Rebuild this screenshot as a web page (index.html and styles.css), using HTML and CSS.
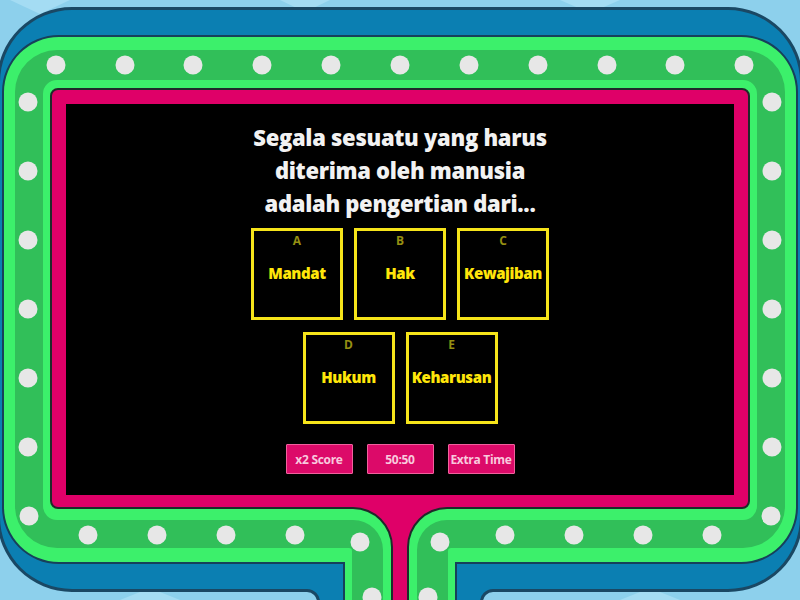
FILE: index.html
```html
<!DOCTYPE html>
<html lang="id">
<head>
<meta charset="utf-8">
<title>Gameshow Quiz</title>
<link rel="stylesheet" href="styles.css">
</head>
<body>
<div class="stage">
  <svg class="frame" width="800" height="600" viewBox="0 0 800 600" aria-hidden="true">
    <polygon class="sky-tri" points="10,0 40,14 70,0"/>
    <polygon class="sky-tri" points="280,0 305,12 330,0"/>
    <polygon class="sky-tri" points="560,0 590,13 620,0"/>
    <polygon class="sky-tri" points="120,600 150,588 180,600"/>
    <polygon class="sky-tri" points="620,600 650,588 680,600"/>
    <path class="blue-edge" d="M72 7 H728 A75 75 0 0 1 803 82 V517 A75 75 0 0 1 728 592 H493 A10 10 0 0 0 483 602 V620 H317 V602 A10 10 0 0 0 307 592 H72 A75 75 0 0 1 -3 517 V82 A75 75 0 0 1 72 7 Z"/>
    <path class="blue" d="M72 10 H728 A72 72 0 0 1 800 82 V517 A72 72 0 0 1 728 589 H493 A13 13 0 0 0 480 602 V620 H320 V602 A13 13 0 0 0 307 589 H72 A72 72 0 0 1 0 517 V82 A72 72 0 0 1 72 10 Z"/>
    <path class="green-edge" d="M59 35 H741 A57 57 0 0 1 798 92 V507 A57 57 0 0 1 741 564 H457 V620 H343 V564 H59 A57 57 0 0 1 2 507 V92 A57 57 0 0 1 59 35 Z"/>
    <path class="green-light" d="M59 37 H741 A55 55 0 0 1 796 92 V507 A55 55 0 0 1 741 562 H455 V620 H345 V562 H59 A55 55 0 0 1 4 507 V92 A55 55 0 0 1 59 37 Z"/>
    <path class="green-dark" d="M57 50 H743 A42 42 0 0 1 785 92 V506 A42 42 0 0 1 743 548 H451 A3 3 0 0 0 448 551 V620 H352 V551 A3 3 0 0 0 349 548 H57 A42 42 0 0 1 15 506 V92 A42 42 0 0 1 57 50 Z"/>
    <path class="green-light" d="M57 80 H743 A14 14 0 0 1 757 94 V506 A14 14 0 0 1 743 520 H447 A30 30 0 0 0 417 550 V620 H383 V550 A30 30 0 0 0 353 520 H57 A14 14 0 0 1 43 506 V94 A14 14 0 0 1 57 80 Z"/>
    <path class="pink-edge" d="M58 88 H742 A8 8 0 0 1 750 96 V501 A8 8 0 0 1 742 509 H447 A38 38 0 0 0 409 547 V620 H391 V547 A38 38 0 0 0 353 509 H58 A8 8 0 0 1 50 501 V96 A8 8 0 0 1 58 88 Z"/>
    <path class="pink" d="M58 90 H742 A6 6 0 0 1 748 96 V501 A6 6 0 0 1 742 507 H447 A40 40 0 0 0 407 547 V620 H393 V547 A40 40 0 0 0 353 507 H58 A6 6 0 0 1 52 501 V96 A6 6 0 0 1 58 90 Z"/>
    <g class="bulbs">
      <circle cx="56" cy="65" r="9.5"/><circle cx="125" cy="65" r="9.5"/><circle cx="193" cy="65" r="9.5"/>
      <circle cx="262" cy="65" r="9.5"/><circle cx="331" cy="65" r="9.5"/><circle cx="400" cy="65" r="9.5"/>
      <circle cx="469" cy="65" r="9.5"/><circle cx="538" cy="65" r="9.5"/><circle cx="607" cy="65" r="9.5"/>
      <circle cx="675" cy="65" r="9.5"/><circle cx="744" cy="65" r="9.5"/>
      <circle cx="28" cy="102" r="9.5"/><circle cx="28" cy="171" r="9.5"/><circle cx="28" cy="240" r="9.5"/>
      <circle cx="28" cy="309" r="9.5"/><circle cx="28" cy="378" r="9.5"/><circle cx="28" cy="447" r="9.5"/>
      <circle cx="29" cy="516" r="9.5"/>
      <circle cx="772" cy="102" r="9.5"/><circle cx="772" cy="171" r="9.5"/><circle cx="772" cy="240" r="9.5"/>
      <circle cx="772" cy="309" r="9.5"/><circle cx="772" cy="378" r="9.5"/><circle cx="772" cy="447" r="9.5"/>
      <circle cx="771" cy="516" r="9.5"/>
      <circle cx="88" cy="535" r="9.5"/><circle cx="157" cy="535" r="9.5"/><circle cx="226" cy="535" r="9.5"/>
      <circle cx="295" cy="535" r="9.5"/><circle cx="360" cy="542" r="9.5"/><circle cx="372" cy="597" r="9.5"/>
      <circle cx="712" cy="535" r="9.5"/><circle cx="643" cy="535" r="9.5"/><circle cx="574" cy="535" r="9.5"/>
      <circle cx="505" cy="535" r="9.5"/><circle cx="440" cy="542" r="9.5"/><circle cx="428" cy="597" r="9.5"/>
    </g>
  </svg>

  <main class="screen">
    <h1 class="question">Segala sesuatu yang harus<br>diterima oleh manusia<br>adalah pengertian dari...</h1>
    <div class="answers">
      <div class="answer-row">
        <div class="card"><span class="key">A</span><span class="choice">Mandat</span></div>
        <div class="card"><span class="key">B</span><span class="choice">Hak</span></div>
        <div class="card"><span class="key">C</span><span class="choice">Kewajiban</span></div>
      </div>
      <div class="answer-row">
        <div class="card"><span class="key">D</span><span class="choice">Hukum</span></div>
        <div class="card"><span class="key">E</span><span class="choice">Keharusan</span></div>
      </div>
    </div>
    <div class="powerups">
      <button class="powerup">x2 Score</button>
      <button class="powerup">50:50</button>
      <button class="powerup">Extra Time</button>
    </div>
  </main>
</div>
</body>
</html>
```

FILE: styles.css
```css
html, body {
  margin: 0;
  padding: 0;
}

body {
  background: #8dd0ec;
  font-family: "Open Sans", Roboto, "Liberation Sans", sans-serif;
}

.stage {
  position: relative;
  width: 800px;
  height: 600px;
  overflow: hidden;
  background: #8dd0ec;
}

.frame {
  position: absolute;
  left: 0;
  top: 0;
  display: block;
}

.sky-tri { fill: #a4dcf3; }
.blue-edge { fill: #1a4864; }
.blue { fill: #0b7fb2; }
.green-edge { fill: #17405a; }
.green-light { fill: #3cf06b; }
.green-dark { fill: #31bf59; }
.pink-edge { fill: #1f2a2a; }
.pink { fill: #df0068; }
.bulbs circle { fill: #e7e7e7; }

.screen {
  position: relative;
  box-sizing: border-box;
  width: 668px;
  height: 391px;
  margin: 104px 0 0 66px;
  padding-top: 17px;
  background: #000;
  display: flex;
  flex-direction: column;
  align-items: center;
}

.question {
  margin: 0;
  color: #f2f2f2;
  font-family: "Open Sans", Roboto, sans-serif;
  font-size: 22px;
  line-height: 33px;
  font-weight: 800;
  letter-spacing: -0.3px;
  text-align: center;
}

.answers {
  margin-top: 8px;
  display: flex;
  flex-direction: column;
  gap: 12px;
}

.answer-row {
  display: flex;
  justify-content: center;
  gap: 11px;
}

.card {
  box-sizing: border-box;
  width: 92px;
  height: 92px;
  border: 3px solid #f6e41a;
  display: grid;
  justify-items: center;
}

.key {
  grid-area: 1 / 1;
  align-self: start;
  margin-top: 3px;
  line-height: 14px;
  font-size: 12px;
  font-weight: 700;
  color: #958f12;
}

.choice {
  grid-area: 1 / 1;
  align-self: center;
  margin-bottom: 2px;
  font-size: 15px;
  font-weight: 800;
  color: #ffe60a;
  letter-spacing: -0.4px;
}

.powerups {
  margin-top: 20px;
  display: flex;
  gap: 14px;
}

.powerup {
  box-sizing: border-box;
  width: 67px;
  height: 30px;
  padding: 0;
  border: 1.5px solid #f1619d;
  border-radius: 1px;
  background: #dc0a69;
  color: #f8c9dd;
  font-family: "Open Sans", Roboto, sans-serif;
  font-size: 12px;
  font-weight: 700;
  letter-spacing: -0.3px;
}
```
